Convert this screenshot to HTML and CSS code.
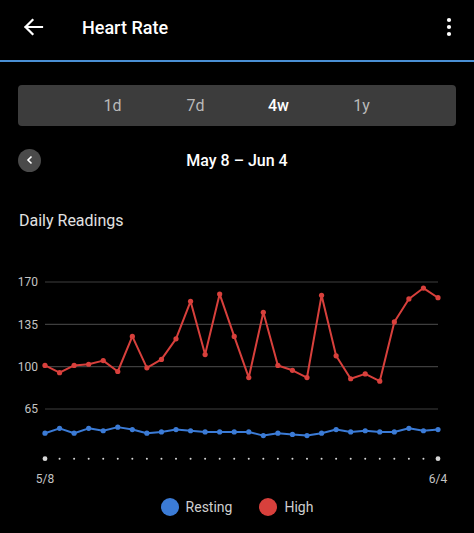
FILE: index.html
```html
<!DOCTYPE html>
<html lang="en">
<head>
<meta charset="UTF-8">
<meta name="viewport" content="width=device-width, initial-scale=1.0">
<title>Heart Rate</title>
<link rel="stylesheet" href="styles.css">
</head>
<body>
<header class="topbar">
  <button class="icon-btn back" aria-label="Back">
    <svg width="28" height="28" viewBox="0 0 28 28"><path d="M23 14H6.5M13.5 7l-7 7 7 7" fill="none" stroke="#fff" stroke-width="2.2" stroke-linecap="square"/></svg>
  </button>
  <h1 class="title">Heart Rate</h1>
  <button class="icon-btn more" aria-label="More">
    <svg width="24" height="24" viewBox="0 0 24 24"><circle cx="12" cy="5" r="2.1" fill="#fff"/><circle cx="12" cy="12" r="2.1" fill="#fff"/><circle cx="12" cy="19" r="2.1" fill="#fff"/></svg>
  </button>
</header>

<ul class="range">
  <li>1d</li>
  <li>7d</li>
  <li class="active">4w</li>
  <li>1y</li>
</ul>

<div class="period">
  <button class="prev-btn" aria-label="Previous">
    <svg width="10" height="10" viewBox="0 0 10 10"><path d="M6.5 1.5 3 5l3.5 3.5" fill="none" stroke="#fff" stroke-width="1.6"/></svg>
  </button>
  <div class="period-label">May 8 – Jun 4</div>
</div>

<h2 class="section-title">Daily Readings</h2>

<svg class="chart" id="chart" width="474" height="224" viewBox="0 266 474 224"></svg>

<div class="legend">
  <span class="legend-item"><i class="dot resting"></i>Resting</span>
  <span class="legend-item"><i class="dot high"></i>High</span>
</div>

<script>
  const resting = [45,49,45,49,47,50,48,45,46,48,47,46,46,46,46,43,45,44,43,45,48,46,47,46,46,49,47,48];
  const high = [101,95,101,102,105,96,125,99,106,123,154,110,160,125,91,145,101,97,91,159,109,90,94,88,137,156,165,157];

  const svg = document.getElementById('chart');
  const left = 45, right = 438;
  const step = (right - left) / (high.length - 1);
  // 170 sits on y=282, every 35 bpm is 42.33px
  const yOf = v => 282 + (170 - v) * (42.33 / 35);

  let out = '';
  [170, 135, 100, 65].forEach(v => {
    const y = yOf(v);
    out += `<line x1="${left}" x2="${right}" y1="${y}" y2="${y}" class="grid"/>`;
    out += `<text x="38" y="${y + 4.3}" class="axis" text-anchor="end">${v}</text>`;
  });

  function series(data, cls) {
    const pts = data.map((v, i) => `${left + i * step},${yOf(v)}`);
    let s = `<polyline points="${pts.join(' ')}" class="line ${cls}"/>`;
    pts.forEach(p => {
      const [x, y] = p.split(',');
      s += `<circle cx="${x}" cy="${y}" r="2.6" class="pt ${cls}"/>`;
    });
    return s;
  }
  out += series(high, 'high');
  out += series(resting, 'resting');

  for (let i = 0; i < high.length; i++) {
    const edge = i === 0 || i === high.length - 1;
    out += `<circle cx="${left + i * step}" cy="458.7" r="${edge ? 2.4 : 1}" class="tick"/>`;
  }
  out += `<text x="${left}" y="482.5" class="axis" text-anchor="middle">5/8</text>`;
  out += `<text x="${right}" y="482.5" class="axis" text-anchor="middle">6/4</text>`;

  svg.innerHTML = out;
</script>
</body>
</html>
```

FILE: styles.css
```css
* {
  box-sizing: border-box;
}

body {
  margin: 0;
  background: #000;
  color: #fff;
  font-family: Roboto, "Noto Sans", Arial, sans-serif;
}

button {
  border: none;
  background: none;
  padding: 0;
  cursor: pointer;
}

/* top bar */
.topbar {
  height: 62px;
  display: flex;
  align-items: center;
  padding: 0 13px 6px 19px;
  border-bottom: 2px solid #4a8fd4;
}

.icon-btn {
  display: flex;
  align-items: center;
  justify-content: center;
}

.title {
  margin: 0 0 0 35px;
  font-size: 18px;
  font-weight: 500;
  flex: 1;
}

/* range picker */
.range {
  list-style: none;
  margin: 23px 18px 0;
  padding: 0;
  height: 41px;
  background: #3c3c3c;
  border-radius: 4px;
  display: flex;
  justify-content: center;
}

.range li {
  width: 83px;
  text-align: center;
  line-height: 41px;
  font-size: 16px;
  color: #b9b9b9;
}

.range li.active {
  color: #fff;
  font-weight: 500;
}

/* period row */
.period {
  margin-top: 22px;
  height: 24px;
  display: grid;
  grid-template-columns: 1fr auto 1fr;
  align-items: center;
  padding: 0 18px;
}

.prev-btn {
  width: 23px;
  height: 23px;
  border-radius: 50%;
  background: #4a4a4a;
  display: flex;
  align-items: center;
  justify-content: center;
}

.period-label {
  font-size: 16px;
  font-weight: 500;
}

.section-title {
  margin: 39px 0 0 19px;
  font-size: 16px;
  font-weight: 400;
  line-height: 20px;
  color: #e2e2e2;
}

/* chart */
.chart {
  display: block;
  margin-top: 35px;
}

.chart .grid {
  stroke: #3e3e3e;
  stroke-width: 1.2;
}

.chart .axis {
  font-size: 12px;
  fill: #c4c4c4;
  font-family: Roboto, Arial, sans-serif;
}

.chart .line {
  fill: none;
  stroke-width: 2;
  stroke-linejoin: round;
}

.chart .line.high {
  stroke: #d8403c;
}

.chart .line.resting {
  stroke: #3b7bd6;
}

.chart .pt.high {
  fill: #d8403c;
}

.chart .pt.resting {
  fill: #3b7bd6;
}

.chart .tick {
  fill: #d6d6d6;
}

/* legend */
.legend {
  margin-top: 8px;
  height: 18px;
  display: flex;
  justify-content: center;
  gap: 27px;
  font-size: 14px;
  color: #cfcfcf;
}

.legend-item {
  display: flex;
  align-items: center;
  gap: 7px;
}

.dot {
  width: 18px;
  height: 18px;
  border-radius: 50%;
}

.dot.resting {
  background: #3b7bd6;
}

.dot.high {
  background: #d8403c;
}
```
